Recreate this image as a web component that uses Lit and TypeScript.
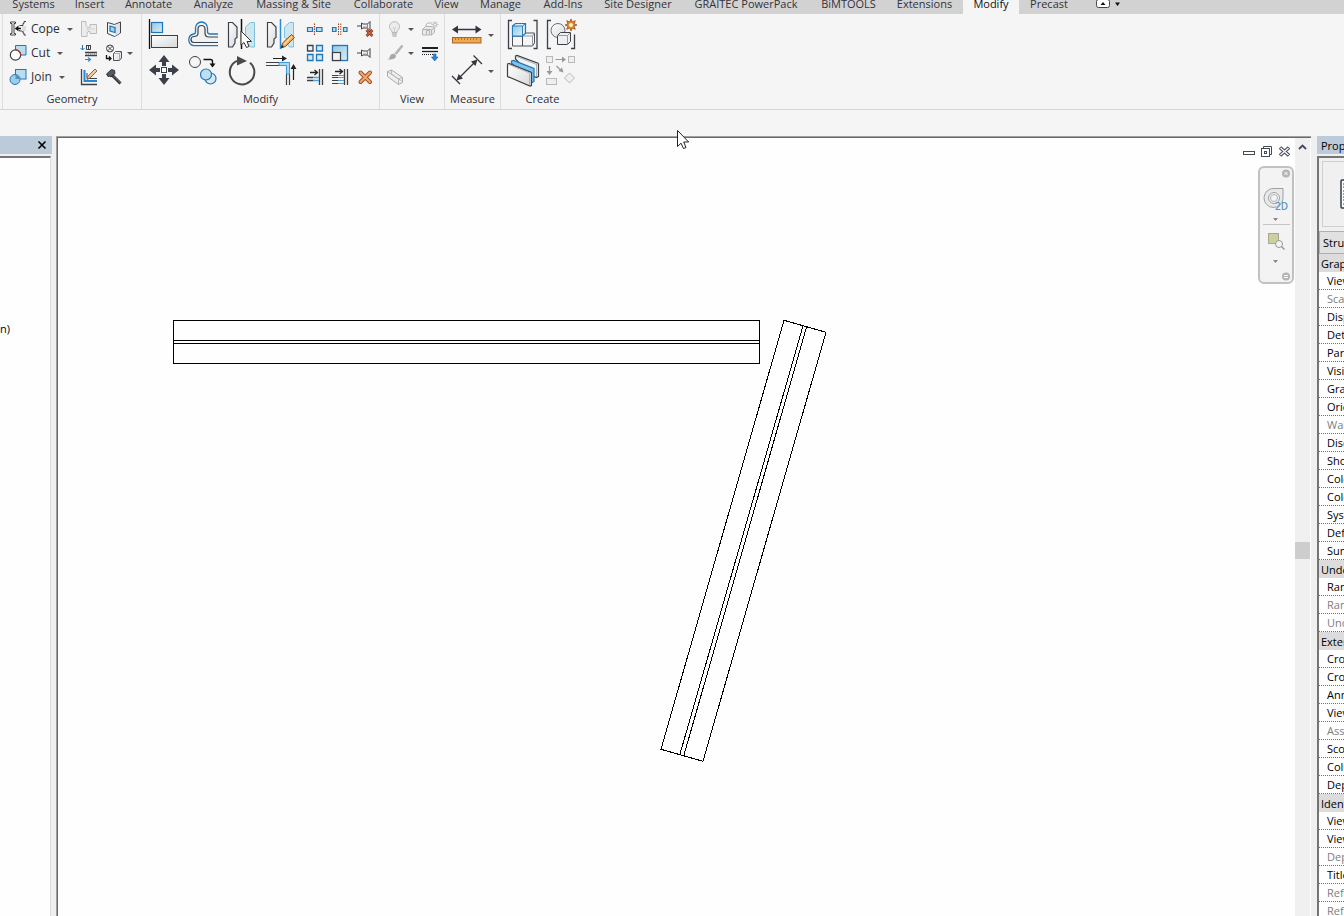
import { LitElement, html, svg, css, nothing, type TemplateResult } from "lit";
import { customElement, property } from "lit/decorators.js";
import { classMap } from "lit/directives/class-map.js";

const K = "#3c4048";
const B = "#2076b8";
const L = "#b9dcef";

const gradients = svg`<defs>
  <linearGradient id="g" x1="0" y1="0" x2="1" y2="1"><stop offset="0" stop-color="#ffffff"/><stop offset="1" stop-color="#d6d8da"/></linearGradient>
  <linearGradient id="b" x1="0" y1="0" x2="1" y2="1"><stop offset="0" stop-color="#8fc8e4"/><stop offset="1" stop-color="#d9eef7"/></linearGradient>
</defs>`;

const pin = svg`<path d="M1 9h4" stroke=${K}/><path d="M5.500 6v6l1.500-1h4.500l2.500 2.500v-9l-2.500 2.500h-4.500z" fill="#f3f3f4" stroke=${K}/><path d="M7 9.500h4.500" stroke="#c4c6ca"/><path d="M11.500 7v4" stroke="#8a8e94"/>`;

/* Small glyphs are drawn on an 18 unit grid. */
const small: Record<string, TemplateResult> = {
  cope: svg`<path d="M1.500 2h5v1.500h-1.500v10h1.500v1.500h-5v-1.500h1.500v-10h-1.500z" fill="#fff" stroke=${K}/><path d="M6.500 8.500h5.500" stroke="#111" stroke-width="1.500"/><path d="M9.500 5.500l-3.500 3 3.500 3z" fill="#111"/><path d="M17 1.500h-2v2h-1v2h-3.500M17 15h-2v-2h-1v-2h-3.500v-1" fill="none" stroke=${K}/><path d="M13 6h4v5h-4z" fill="#dcdfe2"/>`,
  cut: svg`<path d="M6.500 1.500h10.500v9.500h-5.500a5 5 0 0 0-5-5z" fill=${L} stroke=${B}/><circle cx="6.500" cy="11" r="5.200" fill="#fff" stroke=${K} stroke-width="1.200"/><path d="M6.500 5.800a5.200 5.200 0 0 1 5.200 5.200" fill="none" stroke="#b23a2a" stroke-width="1.200"/>`,
  join: svg`<rect x="6.500" y="1.500" width="10.500" height="9.500" fill=${L} stroke=${B}/><circle cx="6" cy="11.500" r="5" fill="#9ccde8" stroke=${B}/><path d="M6.500 6.500a5 5 0 0 1 4.500 4.500h-4.500z" fill="#5b93b8"/>`,
  copeOff: svg`<path d="M1.500 1.500h4.500v4l2 2h2v-3h6.500v9h-6.500v-2h-2l-1 2v3h-5.500z" fill="#ececec" stroke="#bcbcbc"/><path d="M7 9h8M9.500 6.500l-3 2.500 3 2.500" fill="none" stroke="#d2d2d2"/>`,
  wallJoin: svg`<path d="M2.500 1v5M.500 4l2 2 2-2" fill="none" stroke=${B}/><path d="M6.500 2v3.500h4v-3.500M8.500 2v3.500M6 1.500h5" fill="none" stroke=${K}/><path d="M5 8.500h12M5 11.500h12" stroke=${K} stroke-width="1.400"/><path d="M6 10h11" stroke="#777" stroke-dasharray="1 1"/><path d="M5 15.500h5M8 13.500l2.500 2-2.500 2" fill="none" stroke="#1d8fe0" stroke-width="1.200"/>`,
  beamJoin: svg`<path d="M1.500 1v15.500h15.500" fill="none" stroke=${K} stroke-width="1.300"/><path d="M4.500 2v11h12.500" fill="none" stroke="#2a86d0" stroke-width="2"/><path d="M7 5v5.500h10" fill="none" stroke=${K}/><path d="M7 11.500l1-3.500 7-7 2 2-7 7z" fill="#f3c69a" stroke="#8a4a20" stroke-width=".8"/>`,
  face: svg`<path d="M2.500 2.500l7 2 6-2.500v11l-6 3.500-7-3z" fill="#f4f5f6" stroke=${K}/><path d="M10 5l5-2v10l-5 3z" fill="#dfe1e4"/><path d="M5 6l5 1.500v5l-5-1.500z" fill="#9fd4f0" stroke=${B} stroke-width="1.300"/>`,
  demolishCopy: svg`<circle cx="5" cy="4.500" r="3.500" fill="#f4f4f4" stroke=${K}/><path d="M2.500 2l5 5M7.500 2l-5 5" stroke=${K} stroke-width=".9"/><path d="M1.500 11v3.500h4M4 12.500l2 2-2 2" fill="none" stroke="#111" stroke-width="1.300"/><path d="M8.500 9.500l2-2h6v6.500l-2 2.500h-6z" fill="url(#g)" stroke=${K} stroke-width=".9"/><path d="M8.500 9.500h6v7M14.500 9.500l2-2" fill="none" stroke="#999" stroke-width=".8"/>`,
  hammer: svg`<path d="M1.500 6l5-4.500 3 1 .5 3-4 3.500-1.500-1-1 1z" fill="#555a60" stroke="#2c3036"/><path d="M7 7l8.500 8.500" stroke="#2c3036" stroke-width="3"/><path d="M8 7.500l7.500 7.500" stroke="#777c82" stroke-width="1"/>`,
  split: svg`<path d="M1.500 7.500h5v4h-5zM10.500 7.500h5.500v4h-5.500z" fill=${L} stroke=${B} stroke-width="1.200"/><path d="M8.500 3.500v11.500" stroke="#a04028" stroke-width="1.200" stroke-dasharray="1.500 1"/>`,
  splitGap: svg`<path d="M1.500 7.500h3.500v4h-3.500zM12.500 7.500h3.500v4h-3.500z" fill=${L} stroke=${B} stroke-width="1.200"/><path d="M7.500 3.500v11.500M9.800 3.500v11.500" stroke="#a04028" stroke-dasharray="1.500 1"/>`,
  unpin: svg`<g transform="translate(0 -3)">${pin}</g><path d="M10.500 10l6 6M16.500 10l-6 6" stroke="#8c2a14" stroke-width="2.600"/><path d="M10.500 10l6 6M16.500 10l-6 6" stroke="#ee8a5c" stroke-width="1"/>`,
  pin,
  array: svg`<path d="M1.500 1.500h5.500v5.500h-5.500z" fill="#f2f2f2" stroke=${K} stroke-width="1.300"/><path d="M10.500 1.500h6v5.500h-6zM1.500 10.500h5.500v6h-5.500zM10.500 10.500h6v6h-6z" fill="#d2eaf6" stroke=${B} stroke-width="1.300"/>`,
  scale: svg`<rect x="1.500" y="1.500" width="15" height="15" fill="url(#b)" stroke=${B} stroke-width="1.300"/><rect x="1.500" y="8.500" width="8" height="8" fill="#f2f2f2" stroke=${K} stroke-width="1.200"/>`,
  trimOne: svg`<path d="M4 4.500h7M8.500 2l3 2.500-3 2.500" fill="none" stroke="#222" stroke-width="1.300"/><path d="M13.500 1v16M16.500 1v16" stroke=${K} stroke-width="1.300"/><path d="M1 9.500h6M1 12.500h6" stroke=${K} stroke-width="1.300"/><path d="M7 9.500h6M7 12.500h6" stroke="#4aa3e0" stroke-width="1.300"/>`,
  trimMany: svg`<path d="M4 3.500h7M8.500 1l3 2.500-3 2.500" fill="none" stroke="#222" stroke-width="1.300"/><path d="M13.500 1v16M16.500 1v16" stroke=${K} stroke-width="1.300"/><path d="M1 7.500h6M1 9.500h6M1 12.500h6M1 15.500h6" stroke=${K} stroke-width="1.200"/><path d="M7 7.500h6M7 9.500h6M7 12.500h6M7 15.500h6" stroke="#4aa3e0" stroke-width="1.200"/>`,
  remove: svg`<path d="M4.500 4.500l9.500 9.500M14 4.500l-9.500 9.500" stroke="#9a4a22" stroke-width="4" stroke-linecap="round"/><path d="M4.500 4.500l9.500 9.500M14 4.500l-9.500 9.500" stroke="#f4a468" stroke-width="2.200" stroke-linecap="round"/>`,
  bulb: svg`<path d="M6 12.500v-1.500a5 5 0 1 1 5 0v1.500z" fill="#ececec" stroke="#b8b8b8"/><path d="M6 14h5M6.500 16h4" stroke="#b8b8b8" stroke-width="1.300"/><path d="M7 7l1.500 2 1.500-2M8.500 9v3" fill="none" stroke="#ccc"/>`,
  brush: svg`<path d="M16.500 1.500l-7 8.500" stroke="#b4b4b4" stroke-width="2.500"/><path d="M1 15.500c3 0 2-3 4-5l3-1 2 2c0 3-3 4.500-9 4z" fill="#a8a8a8"/>`,
  clipBox: svg`<path d="M1.500 3.500l4-1.500 11 7.500v5l-4 2-11-8z" fill="#eeeeee" stroke="#ababab"/><path d="M1.500 3.500l11 7.500v5.500M12.500 11l4-1.500M5.500 2v4l10 7" fill="none" stroke="#b6b6b6"/>`,
  displace: svg`<path d="M1.500 9.500l3-3h7l2 2v4l-3 2.500h-9z" fill="#e9e9e9" stroke="#b4b4b4"/><path d="M5 6v-1.500l2-1.500h4M5.500 14.500v-4h3v4M10.500 15v-5l3-2M1.500 9.500h9" fill="none" stroke="#b4b4b4"/><path d="M14 1v7M10.500 4.500h7M11.500 2l5 5M16.500 2l-5 5" stroke="#bcbcbc" stroke-width=".9"/><circle cx="14" cy="4.500" r="1.500" fill="#f5f5f5" stroke="#b4b4b4" stroke-width=".8"/>`,
  lineWork: svg`<path d="M1 4h16" stroke="#1d2126" stroke-width="2"/><path d="M1 7.500h16" stroke="#1d2126" stroke-width="1.300"/><path d="M1 10.500h12" stroke="#1d2126" stroke-dasharray="1 1"/><path d="M12.500 10h2.500v3h2l-3.300 4-3.200-4h2z" fill="#1f86e0" stroke="#0f5fae" stroke-width=".6"/>`,
};

const mirrorHalf = svg`<path d="M3.500 4.500h4l4.500 4.500v10.500l-2 1.500v4l-2.500 4h-4z" fill="url(#g)" stroke=${K} stroke-width="1.200"/>`;
const mirrorBlue = svg`<path d="M29.500 4.500h-4l-5 4.500v10.500l2 1.500v4l3 4h4z" fill="#cfe6ee" stroke="#7cc0dc"/>`;

/* Large glyphs are drawn on a 34 unit grid. */
const large: Record<string, TemplateResult> = {
  align: svg`<path d="M2.500 1v30" stroke="#111" stroke-width="1.300"/><rect x="4.500" y="4.500" width="11" height="10" fill="url(#b)" stroke=${B} stroke-width="1.200"/><rect x="4.500" y="17.500" width="26" height="12" fill="url(#g)" stroke=${K}/>`,
  offset: svg`<path d="M32 16h-8q-2.500 0-2.500-2.500v-3.500a6 6 0 0 0-12 0v3.500q0 2.500-2 2.500a6 6 0 0 0 0 11.700h24.500" fill="none" stroke=${B} stroke-width="1.300"/><path d="M32 19h-9q-4 0-4-4v-4a3.500 3.500 0 0 0-7 0v4q0 3.500-4 3.500a3 3 0 0 0 0 6h24z" fill="#f0f1f2" stroke="none"/><path d="M32 19h-9q-4 0-4-4v-4a3.500 3.500 0 0 0-7 0v4q0 3.500-4 3.500a3 3 0 0 0 0 6h24" fill="none" stroke=${K} stroke-width="1.200"/>`,
  mirrorPick: svg`${mirrorHalf}${mirrorBlue}<path d="M16.500 1v30" stroke="#111" stroke-width="1.500"/><path d="M16 13v14l3-2.500 2.500 5 2.500-1-2-5h4.500z" fill="#fff" stroke="#333"/>`,
  mirrorDraw: svg`${mirrorHalf}${mirrorBlue}<path d="M16.500 1v30" stroke="#2a8ddb" stroke-width="1.500"/><path d="M17 30l1.500-5 9-8.500 3 3-9 9z" fill="#f0a850" stroke="#7a4418" stroke-width=".9"/><path d="M20 26.500l8-8" stroke="#ffe0a8" stroke-width="1.200"/><path d="M17 30l1-3 2 2z" fill="#222"/>`,
  move: svg`<path d="M17 1l5.500 7h-3.500v4h-4v-4h-3.500zM17 31l5.500-7h-3.500v-4h-4v4h-3.500zM2 16l7-5.500v3.500h4v4h-4v3.500zM32 16l-7-5.500v3.500h-4v4h4v3.500z" fill=${K}/><rect x="14.500" y="13.500" width="5" height="5" fill="#fff" stroke=${K}/>`,
  copy: svg`<circle cx="9" cy="8" r="5.500" fill="#f6f6f6" stroke=${K}/><path d="M17.500 5.500h7q2 0 2 2v3" fill="none" stroke="#111" stroke-width="1.400"/><path d="M23.500 9.500h6l-3 4z" fill="#111"/><circle cx="24.500" cy="24.500" r="5.500" fill="#d2eaf6" stroke=${B} stroke-width="1.200"/><circle cx="20" cy="20.500" r="5.500" fill="#bfe0f1" stroke=${B} stroke-width="1.200"/>`,
  rotate: svg`<path d="M25 8.700a12.300 12.300 0 1 1-13-1.800" fill="none" stroke="#4a4a4c" stroke-width="2"/><path d="M12 2l10 5-10 4.500z" fill="#4a4a4c"/>`,
  trimCorner: svg`<path d="M2 8.500h13M2 11.500h13M22.500 20v11M25.500 20v11" stroke=${K} stroke-width="1.200"/><path d="M15 8.500h10.500v11.500h-3v-8.500h-7.500z" fill="#a9d8f2" stroke="#3a9ad8"/><path d="M9 4.500h10M29.500 26v-12" stroke="#222" stroke-width="1.200"/><path d="M18 1.500l5 3-5 3zM26.500 15l3-5 3 5z" fill="#222"/>`,
  measure: svg`<path d="M5 11.500h23" stroke="#33373d" stroke-width="1.500"/><path d="M2 11.500l6-4v8zM31.500 11.500l-6-4v8z" fill="#33373d"/><rect x="2.500" y="19.500" width="28.500" height="5.500" fill="#f0a848" stroke="#a8642a"/><path d="M5.500 20v2M8.500 20v2M11.500 20v2M14.500 20v2M17.500 20v2M20.500 20v2M23.500 20v2M26.500 20v2" stroke="#a8642a" stroke-width=".8"/>`,
  dimension: svg`<path d="M8 25l18-18" stroke="#33373d" stroke-width="1.300"/><path d="M6.500 26.500l2-6.500 4.500 4.500zM27.500 5.500l-2 6.500-4.500-4.500z" fill="#33373d"/><path d="M2 22l8 8M23.500 1.500l8.500 8.500" stroke="#33373d" stroke-width="1.300"/>`,
  assembly: svg`<path d="M6 2.500h-3.500v28h3.500M27.500 2.500h3.500v28h-3.500" fill="none" stroke=${K} stroke-width="1.300"/><path d="M16.500 18l2-3h10v10l-2 3h-10z" fill="#f6f6f7" stroke=${K} stroke-width=".9"/><path d="M6.500 18h10v10h-10z" fill="#f6f6f7" stroke=${K} stroke-width=".9"/><path d="M16.500 18h10v10M26.500 18l2-3" fill="none" stroke="#8a8e94" stroke-width=".9"/><path d="M6.500 8l3-2.500h10v10l-3 2.500h-10z" fill="#d9eef7" stroke=${B} stroke-width="1.200"/><path d="M6.500 8h10v10h-10z" fill="url(#b)" stroke=${B} stroke-width=".9"/><path d="M16.500 8l3-2.500" stroke=${B}/>`,
  group: svg`<path d="M6 2.500h-3.500v28h3.500M26 30.500h3.500v-14" fill="none" stroke=${K} stroke-width="1.300"/><circle cx="13" cy="12.500" r="7" fill="url(#g)" stroke="#6a6e74"/><path d="M12.500 17.500l3-3h10v9l-3 3h-10z" fill="#eeeff1" stroke=${K}/><path d="M12.500 17.500h10v9M22.500 17.500l3-3" fill="none" stroke="#999"/><path d="M26 1l1.300 3 3-1.300-1.300 3 3 1.300-3 1.300 1.300 3-3-1.300-1.300 3-1.300-3-3 1.300 1.300-3-3-1.300 3-1.300-1.300-3 3 1.300z" fill="#e08830" stroke="#9c4e18" stroke-width=".8"/><circle cx="26" cy="7" r="2" fill="#fff1c0"/>`,
  parts: svg`<path d="M9.500 5v-3l1.500-.5 21.500 8v13l-2 1-5-2z" fill="#f2f3f4" stroke=${K} stroke-width="1.200"/><path d="M9.500 2l21 8.500v12.500M30.500 10.500l2-1" fill="none" stroke="#9a9ea4" stroke-width=".8"/><path d="M5.500 9v-2l2-.5 20.500 8v13l-3 1.500-4-2z" fill="#7cc3ee" stroke=${B} stroke-width="1.200"/><path d="M1.500 10l1.500-.5 22.500 9v13l-1.500.5-22.500-9.500z" fill="url(#g)" stroke=${K} stroke-width="1.200"/><path d="M1.500 10l22 9v12.500" fill="none" stroke="#a4a8ad" stroke-width=".8"/>`,
  similar: svg`<g fill="#efefef" stroke="#b9b9b9"><rect x="1.500" y="2.500" width="6" height="6"/><rect x="23.500" y="2.500" width="6" height="6"/><path d="M24.500 19l5 5-5 5-5-5z"/><rect x="1.500" y="24.500" width="10" height="6"/></g><path d="M10.500 5.500h7M4.500 12v6M11.500 12l4 4" stroke="#999" stroke-width="1.200"/><path d="M17 2.500l4 3-4 3zM1.500 17h6l-3 4zM18.500 18.500l-5-1.500 3.500-3.500z" fill="#999"/>`,
};

@customElement("tool-button")
class ToolButton extends LitElement {
  @property() icon = "";
  @property() label = "";
  @property() text = "";
  @property({ type: Boolean }) menu = false;

  static styles = css`
    :host { display: block; min-width: 0; }
    .tool { display: flex; align-items: center; gap: 4px; padding: 0; border: 0; background: none; color: #2b2f36; font: 12px/18px "Open Sans", "Noto Sans", sans-serif; white-space: nowrap; }
    .glyph { display: block; flex: none; }
    .caret { flex: none; border: 3px solid transparent; border-top-color: #555; border-bottom: 0; }
    .word { margin-right: 3px; }
  `;

  render() {
    const big = this.icon in large;
    const size = big ? 34 : 18;
    return html`<button class="tool" type="button" aria-label=${this.label}>
      <svg class="glyph" width=${size} height=${size} viewBox="0 0 ${size} ${size}" fill="none" aria-hidden="true">${gradients}${big ? large[this.icon] : small[this.icon]}</svg>
      ${this.text ? html`<span class="word">${this.text}</span>` : nothing}
      ${this.menu ? html`<span class="caret"></span>` : nothing}
    </button>`;
  }
}

interface Tool { icon: string; label: string; text?: string; menu?: boolean }
const tool = (t: Tool) => html`<tool-button icon=${t.icon} label=${t.label} text=${t.text ?? ""} ?menu=${t.menu}></tool-button>`;

@customElement("ribbon-bar")
class RibbonBar extends LitElement {
  static styles = css`
    :host { display: block; font: 11px/18px "Open Sans", "Noto Sans", sans-serif; color: #2b2f36; }
    .tabs { display: grid; grid-template-columns: 63px 49px 69px 61px 99px 81px 45px 63px 62px 88px 128px 77px 75px 58px 58px 60px; align-content: end; height: 14px; padding-left: 2px; background: #d2d2d2; overflow: hidden; }
    .tab { height: 20px; padding: 0; border: 0; background: none; font: inherit; color: #33333b; text-align: center; white-space: nowrap; }
    .current { margin: 0 1px; background: #f5f5f5; color: #111; }
    .toggle { display: flex; align-items: center; justify-content: center; gap: 4px; }
    .groups { display: flex; height: 95px; padding-left: 2px; background: #f5f5f5; border-bottom: 1px solid #d5d5d5; }
    .group { box-sizing: border-box; display: flex; flex-direction: column; justify-content: space-between; border-left: 1px solid #dcdcdc; }
    .title { margin: 0; height: 20px; font: inherit; line-height: 20px; text-align: center; }
    .tools { display: flex; padding: 4px 5px 0; gap: 8px; }
    .big { display: grid; gap: 2px 5px; }
    .small { display: grid; gap: 6px 7px; padding-top: 2px; align-content: start; }
    .geometry { width: 139px; }
    .modify { width: 238px; }
    .view { width: 65px; }
    .measure { width: 56px; }
    .create { width: 84px; border-right: 0; }
    .geometry .small { grid-template-columns: 64px 18px 28px; padding-left: 1px; }
    .modify .big { grid-template-columns: repeat(4, 34px); }
    .modify .small { grid-template-columns: repeat(3, 18px); }
    .view .small { grid-template-columns: 28px 18px; padding-left: 1px; }
    .create .big { grid-template-columns: repeat(2, 34px); }
    .options { height: 26px; background: #f5f5f5; }
  `;

  tabs = ["Systems", "Insert", "Annotate", "Analyze", "Massing & Site", "Collaborate", "View", "Manage", "Add-Ins", "Site Designer", "GRAITEC PowerPack", "BiMTOOLS", "Extensions", "Modify", "Precast"];

  group(name: string, body: TemplateResult) {
    return html`<section class="group ${name.toLowerCase()}"><div class="tools">${body}</div><h2 class="title">${name}</h2></section>`;
  }

  render() {
    return html`
      <nav class="tabs">
        ${this.tabs.map((t) => html`<button type="button" class=${classMap({ tab: true, current: t === "Modify" })}>${t}</button>`)}
        <button type="button" class="tab toggle" aria-label="Minimize ribbon">
          <svg width="24" height="10" viewBox="0 0 24 10" fill="none" aria-hidden="true"><rect x=".5" y=".5" width="13" height="8" rx="2" fill="#fff" stroke="#444"/><path d="M4.500 6h5l-2.500-3zM19 3.500h5l-2.500 3.500z" fill="#111"/></svg>
        </button>
      </nav>
      <div class="groups">
        ${this.group("Geometry", html`<div class="small">
          ${[
            { icon: "cope", label: "Cope", text: "Cope", menu: true }, { icon: "copeOff", label: "Remove coping" }, { icon: "face", label: "Split face" },
            { icon: "cut", label: "Cut", text: "Cut", menu: true }, { icon: "wallJoin", label: "Wall joins" }, { icon: "demolishCopy", label: "Paint", menu: true },
            { icon: "join", label: "Join", text: "Join", menu: true }, { icon: "beamJoin", label: "Beam joins" }, { icon: "hammer", label: "Demolish" },
          ].map(tool)}</div>`)}
        ${this.group("Modify", html`<div class="big">
          ${[
            { icon: "align", label: "Align" }, { icon: "offset", label: "Offset" }, { icon: "mirrorPick", label: "Mirror by axis" }, { icon: "mirrorDraw", label: "Mirror by drawn axis" },
            { icon: "move", label: "Move" }, { icon: "copy", label: "Copy" }, { icon: "rotate", label: "Rotate" }, { icon: "trimCorner", label: "Trim to corner" },
          ].map(tool)}</div><div class="small">
          ${[
            { icon: "split", label: "Split element" }, { icon: "splitGap", label: "Split with gap" }, { icon: "unpin", label: "Unpin" },
            { icon: "array", label: "Array" }, { icon: "scale", label: "Scale" }, { icon: "pin", label: "Pin" },
            { icon: "trimOne", label: "Trim single" }, { icon: "trimMany", label: "Trim multiple" }, { icon: "remove", label: "Delete" },
          ].map(tool)}</div>`)}
        ${this.group("View", html`<div class="small">
          ${[
            { icon: "bulb", label: "Hide in view", menu: true }, { icon: "displace", label: "Displace" },
            { icon: "brush", label: "Override graphics", menu: true }, { icon: "lineWork", label: "Linework" },
            { icon: "clipBox", label: "Selection box" },
          ].map(tool)}</div>`)}
        ${this.group("Measure", html`<div class="big">
          ${[{ icon: "measure", label: "Measure", menu: true }, { icon: "dimension", label: "Dimension", menu: true }].map(tool)}</div>`)}
        ${this.group("Create", html`<div class="big">
          ${[{ icon: "assembly", label: "Assembly" }, { icon: "group", label: "Group" }, { icon: "parts", label: "Parts" }, { icon: "similar", label: "Create similar" }].map(tool)}</div>`)}
      </div>
      <div class="options"></div>`;
  }
}

interface Section { title: string; rows: string[] }
/* A leading "-" marks a read-only parameter. */
const sections: Section[] = [
  { title: "Graphics", rows: ["View Scale", "-Scale Value", "Display Model", "Detail Level", "Parts Visibility", "Visibility/Graphics", "Graphic Display", "Orientation", "-Wall Join Display", "Discipline", "Show Hidden Lines", "Color Scheme Location", "Color Scheme", "System Color", "Default Analysis", "Sun Path"] },
  { title: "Underlay", rows: ["Range: Base Level", "-Range: Top Level", "-Underlay Orientation"] },
  { title: "Extents", rows: ["Crop View", "Crop Region Visible", "Annotation Crop", "View Range", "-Associated Level", "Scope Box", "Column Symbols", "Depth Clipping"] },
  { title: "Identity Data", rows: ["View Template", "View Name", "-Dependency", "Title on Sheet", "-Referencing Sheet", "-Referencing Detail"] },
];

@customElement("property-palette")
class PropertyPalette extends LitElement {
  static styles = css`
    :host { display: flex; flex-direction: column; overflow: hidden; font: 11px/17px "Open Sans", "Noto Sans", sans-serif; color: #000; white-space: nowrap; background: #f0f0f0; }
    .head { margin: 0; height: 18px; flex: none; padding-left: 4px; background: #bccbd9; font: inherit; line-height: 20px; }
    .body { flex: 1; margin-top: 2px; border: 2px solid #757575; border-right: 0; border-bottom: 0; overflow: hidden; }
    .type { box-sizing: border-box; display: flex; align-items: center; height: 66px; margin: 3px 0 4px 3px; padding-left: 17px; border: 1px solid #cfcfcf; border-right: 0; }
    .glyph { flex: none; }
    .filter { box-sizing: border-box; display: block; width: 100%; height: 23px; padding: 0 0 0 3px; border: 1px solid #b0b0b0; border-right: 0; background: #e1e1e1; font: inherit; text-align: left; overflow: hidden; }
    .grid { width: 100%; border-collapse: separate; border-spacing: 0; table-layout: fixed; background: #fff; }
    .cell { height: 17px; padding: 0 0 0 8px; border-bottom: 1px dotted #707070; font-weight: 400; text-align: left; overflow: hidden; }
    .section { padding: 1px 0 0 2px; background: #dcdcdc; border-bottom: 0; }
    .locked { color: #7d7d7d; }
  `;

  render() {
    return html`
      <h2 class="head">Properties</h2>
      <div class="body">
        <div class="type">
          <svg class="glyph" width="24" height="30" viewBox="0 0 24 30" fill="none" aria-hidden="true"><rect x="1" y="1" width="22" height="28" rx="1" fill="#fff" stroke="#333b46" stroke-width="1.500"/><path d="M3 5h14M3 8h14M3 12h14M3 15h14M3 18h14M3 21h14M3 25h14" stroke="#333b46"/></svg>
        </div>
        <button type="button" class="filter">Structural Plan</button>
        <table class="grid"><tbody>
          ${sections.map((s) => html`
            <tr><th class="cell section" scope="rowgroup">${s.title}</th></tr>
            ${s.rows.map((r) => html`<tr><td class=${classMap({ cell: true, locked: r.startsWith("-") })}>${r.replace(/^-/, "")}</td></tr>`)}`)}
        </tbody></table>
      </div>`;
  }
}

@customElement("drawing-view")
class DrawingView extends LitElement {
  static styles = css`
    :host { box-sizing: border-box; display: flex; justify-content: flex-end; position: relative; border: 1px solid #a0a0a0; border-width: 1px 0 0 1px; box-shadow: inset 1px 1px 0 #696969; background: #fefefe; overflow: hidden; padding: 1px 0 0 1px; }
    .model { position: absolute; left: 0; top: 0; }
    .side { position: relative; display: flex; flex-direction: column; align-items: flex-end; gap: 8px; padding: 7px 1px 0 0; }
    .window { display: flex; gap: 5px; padding-right: 3px; }
    .plain { display: block; padding: 0; border: 0; background: none; }
    .art { display: block; }
    .wheel { box-sizing: border-box; width: 36px; height: 118px; border: 2px solid #c1c1c1; border-radius: 6px; background: #f3f3f3; }
    .scroll { display: flex; flex-direction: column; width: 15px; margin-right: 1px; background: #f0f0f0; position: relative; }
    .before { flex: 387; }
    .thumb { height: 17px; background: #cdcdcd; }
    .after { flex: 357; }
  `;

  render() {
    return html`
      <svg class="model" width="900" height="700" viewBox="57 137 900 700" fill="none" stroke="#000" shape-rendering="crispEdges" role="img" aria-label="Two steel beams">
        <path d="M173.500 320.500h586v43h-586zM173.500 340.500h586M173.500 343.500h586"/>
        <path d="M784 320.300l42 12-123 429-42-12zM803 326l-123 428M806.500 327l-122.500 428"/>
      </svg>
      <div class="side">
        <div class="window">
          <button class="plain" type="button" aria-label="Minimize"><svg class="art" width="13" height="13" viewBox="0 0 13 13" fill="none"><rect x="1.500" y="6.500" width="11" height="3" fill="#fff" stroke="#444a5c"/></svg></button>
          <button class="plain" type="button" aria-label="Restore"><svg class="art" width="13" height="13" viewBox="0 0 13 13" fill="none" stroke="#444a5c"><path d="M3.500 3v-1.500h8v8h-2" fill="#fff"/><rect x="1.500" y="3.500" width="8" height="8" fill="#fff"/><rect x="4.500" y="6.500" width="2" height="2"/></svg></button>
          <button class="plain" type="button" aria-label="Close"><svg class="art" width="13" height="13" viewBox="0 0 13 13" fill="none"><path d="M2 2.500l9 8M11 2.500l-9 8" stroke="#444a5c" stroke-width="3.600"/><path d="M2.500 3l8 7M10.500 3l-8 7" stroke="#fff" stroke-width="1.300"/></svg></button>
        </div>
        <div class="wheel">
          <svg class="art" width="32" height="114" viewBox="-1 -1 32 114" fill="none" role="img" aria-label="Navigation bar 2D">
            <circle cx="25" cy="4.500" r="4" fill="#b4b4b4"/><path d="M23.500 3l3 3M26.500 3l-3 3" stroke="#fff"/>
            <path d="M13 19.500h9v10a9.500 9.500 0 1 1-9-10z" fill="#e7e9eb" stroke="#a0a0a0"/><circle cx="13" cy="29" r="5.500" fill="#f4f4f4" stroke="#a0a0a0"/><circle cx="13" cy="29" r="3.500" stroke="#b4b4b4"/>
            <text x="14" y="41" font-family="Open Sans, sans-serif" font-size="10" font-weight="600" fill="#5a9ac8">2D</text>
            <path d="M12 49h5l-2.500 3zM12 91h5l-2.500 3z" fill="#888"/><path d="M2 55.500h27" stroke="#c4c4c4"/>
            <rect x="7.500" y="64.500" width="10" height="10" fill="#ccd0a0" stroke="#a8a890"/><circle cx="18" cy="75" r="3.500" fill="#f4f4f4" stroke="#999"/><path d="M20.500 77.500l3 3" stroke="#999" stroke-width="1.500"/>
            <circle cx="25" cy="107.500" r="4" fill="#b4b4b4"/><path d="M23 106.500h4M23 108.500h4" stroke="#fff"/>
          </svg>
        </div>
      </div>
      <div class="scroll">
        <button class="plain" type="button" aria-label="Scroll up"><svg class="art" width="15" height="18" viewBox="0 0 15 18" fill="none"><path d="M4 11l3.500-3.500 3.500 3.500" stroke="#444a5c" stroke-width="1.800"/></svg></button>
        <div class="before"></div><div class="thumb"></div><div class="after"></div>
      </div>`;
  }
}

@customElement("app-root")
class AppRoot extends LitElement {
  static styles = css`
    :host { display: flex; flex-direction: column; position: relative; height: 100vh; overflow: hidden; background: #f5f5f5; font: 11px/18px "Open Sans", "Noto Sans", sans-serif; }
    .work { flex: 1; min-height: 0; display: grid; grid-template-columns: 52px minmax(0, 1fr) 27px; background: #f0f0f0; }
    .canvas { margin: 0 6px 0 4px; }
    .browser { display: flex; flex-direction: column; }
    .head { display: flex; justify-content: flex-end; align-items: center; height: 18px; padding-right: 5px; background: #bccbd9; }
    .close { display: block; padding: 0; border: 0; background: none; }
    .art { display: block; }
    .tree { flex: 1; margin: 2px 1px 0 0; padding-top: 162px; border-top: 2px solid #757575; border-right: 1px solid #dcdcdc; background: #fefefe; }
    .pointer { position: absolute; left: 677px; top: 130px; }
  `;

  render() {
    return html`
      <ribbon-bar></ribbon-bar>
      <main class="work">
        <aside class="browser">
          <div class="head"><button class="close" type="button" aria-label="Close browser"><svg class="art" width="10" height="10" viewBox="0 0 10 10" fill="none"><path d="M1.500 1.500l7 7M8.500 1.500l-7 7" stroke="#000" stroke-width="1.600"/></svg></button></div>
          <div class="tree">n)</div>
        </aside>
        <drawing-view class="canvas"></drawing-view>
        <property-palette></property-palette>
      </main>
      <svg class="pointer" width="13" height="20" viewBox="0 0 13 20" fill="none" aria-hidden="true"><path d="M.5.5v16l3.500-3.300 2.500 5.300 2.500-1-2.300-5.500h5z" fill="#fff" stroke="#222"/></svg>`;
  }
}
